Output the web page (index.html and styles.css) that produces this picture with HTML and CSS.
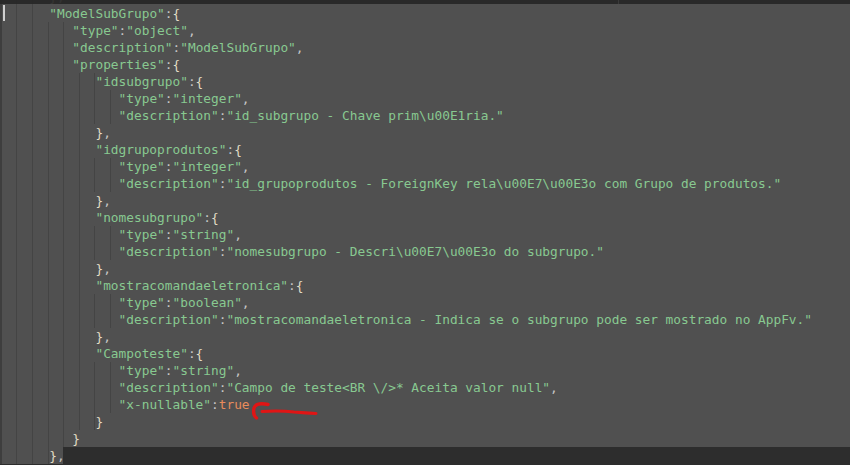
FILE: index.html
```html
<!DOCTYPE html>
<html>
<head>
<meta charset="utf-8">
<link rel="stylesheet" href="styles.css">
</head>
<body>
<div class="screen">
  <div class="topbar"><span class="divider"></span></div>
  <div class="viewport">
    <div class="code">
      <div class="ln"><span class="ind n2 g2"></span><span class="b">}</span><span class="p">,</span></div>
      <div class="ln"><span class="ind n2 g2"><span class="caret"></span></span><span class="s">"ModelSubGrupo"</span><span class="p">:</span><span class="b">{</span></div>
      <div class="ln"><span class="ind n3 g4"></span><span class="s">"type"</span><span class="p">:</span><span class="s">"object"</span><span class="p">,</span></div>
      <div class="ln"><span class="ind n3 g4"></span><span class="s">"description"</span><span class="p">:</span><span class="s">"ModelSubGrupo"</span><span class="p">,</span></div>
      <div class="ln"><span class="ind n3 g4"></span><span class="s">"properties"</span><span class="p">:</span><span class="b">{</span></div>
      <div class="ln"><span class="ind n4 g6"></span><span class="s">"idsubgrupo"</span><span class="p">:</span><span class="b">{</span></div>
      <div class="ln"><span class="ind n5 g7"></span><span class="s">"type"</span><span class="p">:</span><span class="s">"integer"</span><span class="p">,</span></div>
      <div class="ln"><span class="ind n5 g7"></span><span class="s">"description"</span><span class="p">:</span><span class="s">"id_subgrupo - Chave prim\u00E1ria."</span></div>
      <div class="ln"><span class="ind n4 g5"></span><span class="b">}</span><span class="p">,</span></div>
      <div class="ln"><span class="ind n4 g5"></span><span class="s">"idgrupoprodutos"</span><span class="p">:</span><span class="b">{</span></div>
      <div class="ln"><span class="ind n5 g7"></span><span class="s">"type"</span><span class="p">:</span><span class="s">"integer"</span><span class="p">,</span></div>
      <div class="ln"><span class="ind n5 g7"></span><span class="s">"description"</span><span class="p">:</span><span class="s">"id_grupoprodutos - ForeignKey rela\u00E7\u00E3o com Grupo de produtos."</span></div>
      <div class="ln"><span class="ind n4 g5"></span><span class="b">}</span><span class="p">,</span></div>
      <div class="ln"><span class="ind n4 g5"></span><span class="s">"nomesubgrupo"</span><span class="p">:</span><span class="b">{</span></div>
      <div class="ln"><span class="ind n5 g7"></span><span class="s">"type"</span><span class="p">:</span><span class="s">"string"</span><span class="p">,</span></div>
      <div class="ln"><span class="ind n5 g7"></span><span class="s">"description"</span><span class="p">:</span><span class="s">"nomesubgrupo - Descri\u00E7\u00E3o do subgrupo."</span></div>
      <div class="ln"><span class="ind n4 g5"></span><span class="b">}</span><span class="p">,</span></div>
      <div class="ln"><span class="ind n4 g5"></span><span class="s">"mostracomandaeletronica"</span><span class="p">:</span><span class="b">{</span></div>
      <div class="ln"><span class="ind n5 g7"></span><span class="s">"type"</span><span class="p">:</span><span class="s">"boolean"</span><span class="p">,</span></div>
      <div class="ln"><span class="ind n5 g7"></span><span class="s">"description"</span><span class="p">:</span><span class="s">"mostracomandaeletronica - Indica se o subgrupo pode ser mostrado no AppFv."</span></div>
      <div class="ln"><span class="ind n4 g5"></span><span class="b">}</span><span class="p">,</span></div>
      <div class="ln"><span class="ind n4 g5"></span><span class="s">"Campoteste"</span><span class="p">:</span><span class="b">{</span></div>
      <div class="ln"><span class="ind n5 g7"></span><span class="s">"type"</span><span class="p">:</span><span class="s">"string"</span><span class="p">,</span></div>
      <div class="ln"><span class="ind n5 g7"></span><span class="s">"description"</span><span class="p">:</span><span class="s">"Campo de teste&lt;BR \/&gt;* Aceita valor null"</span><span class="p">,</span></div>
      <div class="ln"><span class="ind n5 g7"></span><span class="s">"x-nullable"</span><span class="p">:</span><span class="k">true</span></div>
      <div class="ln"><span class="ind n4 g6"></span><span class="b">}</span></div>
      <div class="ln"><span class="ind n3 g4"></span><span class="b">}</span></div>
      <div class="ln last"><span class="ind n2 g3"></span><span class="b">}</span><span class="p">,</span></div>
    </div>
  </div>
  <svg class="mark" width="80" height="30" viewBox="0 0 80 30">
    <path d="M18 4.5 Q6 2 4 8 Q2.5 15 6.5 18" fill="none" stroke="#e01515" stroke-width="3.4" stroke-linecap="round"/>
    <path d="M12 11.5 Q30 10.5 44 12 Q56 13 66 13.5" fill="none" stroke="#e01515" stroke-width="3" stroke-linecap="round"/>
  </svg>
</div>
</body>
</html>
```

FILE: styles.css
```css
html, body {
  margin: 0;
  padding: 0;
}

body {
  background: #2d2d2d;
  width: 850px;
  height: 465px;
  overflow: hidden;
}

.screen {
  position: relative;
  width: 850px;
  height: 465px;
  --gl: linear-gradient(#444444, #444444);
}

.topbar {
  position: absolute;
  left: 0;
  top: 0;
  width: 850px;
  height: 4px;
  background: rgba(38, 38, 38, 0.92);
  z-index: 2;
}

.divider {
  position: absolute;
  left: 618px;
  top: 0;
  width: 1px;
  height: 4px;
  background: #3a3a3a;
}

.viewport {
  overflow: hidden;
}

.code {
  margin-top: -12px;
  font-family: "DejaVu Sans Mono", "Liberation Mono", monospace;
  font-size: 12.8px;
  line-height: 17px;
}

.ln {
  display: flex;
  height: 17px;
  white-space: pre;
  background: #505050;
  border-left: 2px solid #3e3e3e;
}

.ln.last {
  width: 61px;
}

.ind {
  position: relative;
  flex: none;
  height: 17px;
}

.n2 { width: calc(6ch + 1px); }
.n3 { width: calc(9ch + 1px); }
.n4 { width: calc(12ch + 1px); }
.n5 { width: calc(15ch + 1px); }

.g2 {
  background: var(--gl) 14px 0/1px 100% no-repeat,
              var(--gl) 30px 0/1px 100% no-repeat;
}
.g3 {
  background: var(--gl) 14px 0/1px 100% no-repeat,
              var(--gl) 30px 0/1px 100% no-repeat,
              var(--gl) 46px 0/1px 100% no-repeat;
}
.g4 {
  background: var(--gl) 14px 0/1px 100% no-repeat,
              var(--gl) 30px 0/1px 100% no-repeat,
              var(--gl) 46px 0/1px 100% no-repeat,
              var(--gl) 61px 0/1px 100% no-repeat;
}
.g5 {
  background: var(--gl) 14px 0/1px 100% no-repeat,
              var(--gl) 30px 0/1px 100% no-repeat,
              var(--gl) 46px 0/1px 100% no-repeat,
              var(--gl) 61px 0/1px 100% no-repeat,
              var(--gl) 77px 0/1px 100% no-repeat;
}
.g6 {
  background: var(--gl) 14px 0/1px 100% no-repeat,
              var(--gl) 30px 0/1px 100% no-repeat,
              var(--gl) 46px 0/1px 100% no-repeat,
              var(--gl) 61px 0/1px 100% no-repeat,
              var(--gl) 77px 0/1px 100% no-repeat,
              var(--gl) 92px 0/1px 100% no-repeat;
}
.g7 {
  background: var(--gl) 14px 0/1px 100% no-repeat,
              var(--gl) 30px 0/1px 100% no-repeat,
              var(--gl) 46px 0/1px 100% no-repeat,
              var(--gl) 61px 0/1px 100% no-repeat,
              var(--gl) 77px 0/1px 100% no-repeat,
              var(--gl) 92px 0/1px 100% no-repeat,
              var(--gl) 108px 0/1px 100% no-repeat;
}

.caret {
  position: absolute;
  left: 1px;
  top: 0;
  width: 2px;
  height: 16px;
  background: #cfcfcf;
}

.s { color: #88c990; }
.p { color: #c6c6c6; }
.b { color: #e2ddc6; }
.k { color: #e88c5c; }

.mark {
  position: absolute;
  left: 250px;
  top: 400px;
  z-index: 3;
}
```
